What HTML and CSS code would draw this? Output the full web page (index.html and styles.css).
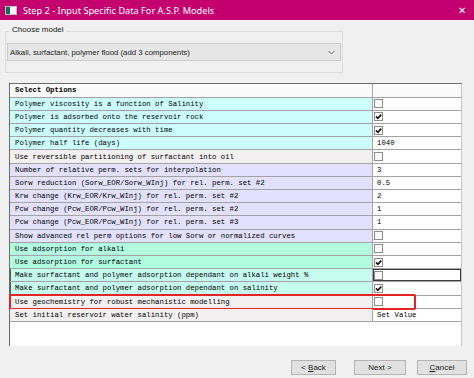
FILE: index.html
```html
<!DOCTYPE html>
<html lang="en">
<head>
  <meta charset="UTF-8" />
  <title>Step 2 - Input Specific Data For A.S.P. Models</title>
  <link rel="stylesheet" href="styles.css">
</head>
<body>
  <div class="titlebar">
    <span class="app-icon"></span>
    <span class="title">Step 2 - Input Specific Data For A.S.P. Models</span>
    <span class="close">&#x2715;</span>
  </div>

  <!-- model chooser -->
  <div class="group">
    <div class="legend">Choose model</div>
    <div class="select">
      <span>Alkali, surfactant, polymer flood (add 3 components)</span>
      <svg class="chevron" width="7" height="5" viewBox="0 0 7 5"><path d="M0.5 1 L3.5 4 L6.5 1" fill="none" stroke="#666" stroke-width="1"/></svg>
    </div>
  </div>

  <!-- options grid -->
  <div class="grid">
    <div class="row head"><div class="name">Select Options</div><div class="val"></div></div>

    <div class="row cyan"><div class="name">Polymer viscosity is a function of Salinity</div><div class="val"><span class="box"></span></div></div>
    <div class="row cyan"><div class="name">Polymer is adsorbed onto the reservoir rock</div><div class="val"><span class="box on"></span></div></div>
    <div class="row cyan"><div class="name">Polymer quantity decreases with time</div><div class="val"><span class="box on"></span></div></div>
    <div class="row cyan"><div class="name">Polymer half life (days)</div><div class="val">1040</div></div>
    <div class="row grey"><div class="name">Use reversible partitioning of surfactant into oil</div><div class="val"><span class="box"></span></div></div>
    <div class="row lav"><div class="name">Number of relative perm. sets for interpolation</div><div class="val">3</div></div>
    <div class="row lav"><div class="name">Sorw reduction (Sorw_EOR/Sorw_WInj) for rel. perm. set #2</div><div class="val">0.5</div></div>
    <div class="row lav"><div class="name">Krw change (Krw_EOR/Krw_WInj) for rel. perm. set #2</div><div class="val">2</div></div>
    <div class="row lav"><div class="name">Pcw change (Pcw_EOR/Pcw_WInj) for rel. perm. set #2</div><div class="val">1</div></div>
    <div class="row lav"><div class="name">Pcw change (Pcw_EOR/Pcw_WInj) for rel. perm. set #3</div><div class="val">1</div></div>
    <div class="row lav"><div class="name">Show advanced rel perm options for low Sorw or normalized curves</div><div class="val"><span class="box"></span></div></div>
    <div class="row aqua"><div class="name">Use adsorption for alkali</div><div class="val"><span class="box"></span></div></div>
    <div class="row aqua"><div class="name">Use adsorption for surfactant</div><div class="val"><span class="box on"></span></div></div>
    <div class="row mint"><div class="name">Make surfactant and polymer adsorption dependant on alkali weight %</div><div class="val focus"><span class="box"></span></div></div>
    <div class="row mint"><div class="name">Make surfactant and polymer adsorption dependant on salinity</div><div class="val"><span class="box on"></span></div></div>
    <div class="row grey"><div class="name">Use geochemistry for robust mechanistic modelling<span class="highlight"></span></div><div class="val"><span class="box"></span></div></div>
    <div class="row grey"><div class="name">Set initial reservoir water salinity (ppm)</div><div class="val">Set Value</div></div>
  </div>

  <div class="buttons">
    <button class="btn back">&lt; <u>B</u>ack</button>
    <button class="btn next">Next &gt;</button>
    <button class="btn cancel"><u>C</u>ancel</button>
  </div>
</body>
</html>
```

FILE: styles.css
```css
body {
  margin: 0;
  width: 474px;
  height: 378px;
  overflow: hidden;
  background-color: #f0f0f0;
  font-family: "Liberation Sans", Arial, sans-serif;
  color: #1a1a1a;
}

.titlebar {
  height: 20px;
  display: flex;
  align-items: center;
  padding-left: 5px;
  background-color: #c4006f;
  color: #ffffff;
}

.app-icon {
  width: 10px;
  height: 7px;
  margin-right: 6px;
  border: 1px solid #b9c4c0;
  background: linear-gradient(to right, #17694f 45%, #ffffff 45%);
}

.title {
  flex: 1;
  font-family: "Noto Sans", sans-serif;
  font-size: 9.2px;
}

.close {
  width: 24px;
  text-align: center;
  font-size: 10px;
}

/* model chooser */
.group {
  width: 338px;
  height: 42px;
  margin: 11px 0 0 5px;
  box-sizing: border-box;
  border: 1px solid #dcdcdc;
}

.legend {
  width: fit-content;
  margin: -7px 0 0 4px;
  padding: 0 2px;
  font-size: 8px;
  line-height: 10px;
  background-color: #f0f0f0;
}

.select {
  width: 334px;
  height: 18px;
  margin: 8px 0 0 1px;
  box-sizing: border-box;
  display: flex;
  align-items: center;
  justify-content: space-between;
  padding: 0 5px 0 2px;
  font-size: 7.8px;
  background-color: #e6e6e6;
  border: 1px solid #cacaca;
}

/* options grid */
.grid {
  width: 453px;
  height: 263px;
  margin: 10px 0 0 9px;
  box-sizing: border-box;
  background-color: #ffffff;
  border-top: 1px solid #6a6a6a;
  border-left: 1px solid #6a6a6a;
  border-right: 1px solid #c4c4c4;
  font-family: "Liberation Mono", "Courier New", monospace;
  font-size: 7.3px;
  color: #000000;
}

.row {
  display: grid;
  grid-template-columns: 363px 1fr;
  height: 13.2px;
  box-sizing: border-box;
  border-bottom: 1px solid #a3a3a3;
}

.row.head {
  height: 13.7px;
  font-weight: bold;
  background-color: #fafafa;
}

.name {
  position: relative;
  display: flex;
  align-items: center;
  padding-left: 5px;
  white-space: nowrap;
  border-right: 1px solid #a3a3a3;
}

.val {
  display: flex;
  align-items: center;
  padding-left: 4px;
  background-color: #ffffff;
}

.head .val {
  background-color: #fafafa;
}

.cyan .name { background-color: #ccfefe; }
.grey .name { background-color: #f1efef; }
.lav .name  { background-color: #e2e0fc; }
.aqua .name { background-color: #b2fce0; }
.mint .name {
  background-color: #c6fbef;
  box-shadow: inset 1px 0 0 #5a5a5a;
}

.box {
  width: 9px;
  height: 9px;
  margin-left: -3px;
  box-sizing: border-box;
  border: 1px solid #8c8c8c;
  background-color: #ffffff;
}

.box.on {
  background: #ffffff url("data:image/svg+xml,%3Csvg xmlns='http://www.w3.org/2000/svg' width='7' height='7'%3E%3Cpath d='M1 3.4 L2.9 5.3 L6.2 1.6' fill='none' stroke='%23111' stroke-width='1.6'/%3E%3C/svg%3E") no-repeat center;
}

.val.focus {
  box-shadow: inset 0 0 0 1px #3c3c3c;
}

/* red annotation around the geochemistry row */
.highlight {
  position: absolute;
  left: -1px;
  top: -2px;
  width: 407px;
  height: 16px;
  box-sizing: border-box;
  border: 2px solid #e42424;
  border-radius: 2px;
}

.buttons {
  display: flex;
  justify-content: flex-end;
  margin-top: 14px;
  padding-right: 7px;
}

.btn {
  height: 15px;
  padding: 0;
  font-family: "Liberation Sans", Arial, sans-serif;
  font-size: 8px;
  color: #1a1a1a;
  background-color: #e1e1e1;
  border: 1px solid #b4b4b4;
}

.back { width: 45px; }
.next { width: 52px; margin-left: 18px; }
.cancel { width: 50px; margin-left: 11px; }
```
